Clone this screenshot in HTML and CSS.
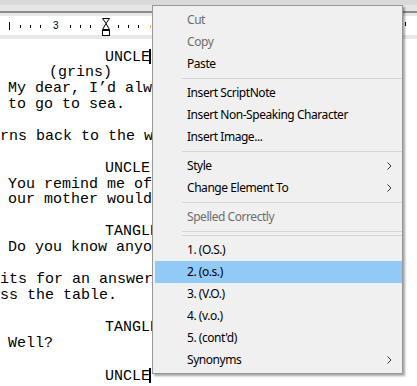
FILE: index.html
```html
<!DOCTYPE html>
<html>
<head>
<meta charset="utf-8">
<link rel="stylesheet" href="styles.css">
</head>
<body>
<div class="app">
  <div class="topband"></div>
  <div class="rulerwrap">
    <div class="ruler">
      <span class="tick tall t1"></span>
      <span class="tick t2"></span>
      <span class="tick t3"></span>
      <span class="tick t4"></span>
      <span class="num">3</span>
      <span class="tick t6"></span>
      <span class="tick t7"></span>
      <span class="tick t8"></span>
      <svg class="marker" width="10" height="20" viewBox="0 0 10 20">
        <path d="M1.5 0.5 H8.5 L5 5.5 Z" fill="#fff" stroke="#000"/>
        <path d="M5 5.5 L1.5 11.5 H8.5 Z" fill="#fff" stroke="#000"/>
        <rect x="1.5" y="12.5" width="7" height="5" fill="#fff" stroke="#000"/>
      </svg>
      <span class="tick t10"></span>
      <span class="tick t11"></span>
      <span class="tick t12"></span>
      <span class="orange"></span>
      <span class="tick far"></span>
    </div>
  </div>
  <div class="doc">
    <div class="line name">UNCLE<span class="caret"></span></div>
    <div class="line paren">(grins)</div>
    <div class="line dlg">My dear, I’d always wanted</div>
    <div class="line dlg">to go to sea.</div>
    <div class="line"></div>
    <div class="line act">rns back to the window.</div>
    <div class="line"></div>
    <div class="line name">UNCLE</div>
    <div class="line dlg">You remind me of</div>
    <div class="line dlg">our mother would</div>
    <div class="line"></div>
    <div class="line name">TANGLE</div>
    <div class="line dlg">Do you know anyone</div>
    <div class="line"></div>
    <div class="line act">its for an answer</div>
    <div class="line act">ss the table.</div>
    <div class="line"></div>
    <div class="line name">TANGLE</div>
    <div class="line dlg">Well?</div>
    <div class="line"></div>
    <div class="line name">UNCLE<span class="caret"></span></div>
  </div>

  <div class="menu">
    <div class="item disabled">Cut</div>
    <div class="item disabled">Copy</div>
    <div class="item">Paste</div>
    <div class="sep"></div>
    <div class="item">Insert ScriptNote</div>
    <div class="item">Insert Non-Speaking Character</div>
    <div class="item">Insert Image...</div>
    <div class="sep"></div>
    <div class="item sub">Style<svg class="chev" width="5" height="8" viewBox="0 0 5 8"><path d="M0.5 0.5 L4 4 L0.5 7.5" fill="none" stroke="#333" stroke-width="1"/></svg></div>
    <div class="item sub">Change Element To<svg class="chev" width="5" height="8" viewBox="0 0 5 8"><path d="M0.5 0.5 L4 4 L0.5 7.5" fill="none" stroke="#333" stroke-width="1"/></svg></div>
    <div class="sep"></div>
    <div class="item disabled">Spelled Correctly</div>
    <div class="sep"></div>
    <div class="sep"></div>
    <div class="item">1. (O.S.)</div>
    <div class="item hover">2. (o.s.)</div>
    <div class="item">3. (V.O.)</div>
    <div class="item">4. (v.o.)</div>
    <div class="item">5. (cont'd)</div>
    <div class="item sub">Synonyms<svg class="chev" width="5" height="8" viewBox="0 0 5 8"><path d="M0.5 0.5 L4 4 L0.5 7.5" fill="none" stroke="#333" stroke-width="1"/></svg></div>
  </div>
</div>
</body>
</html>
```

FILE: styles.css
```css
html, body {
  margin: 0;
  padding: 0;
}
body {
  width: 417px;
  height: 386px;
  overflow: hidden;
  background: #fff;
}
.app {
  position: relative;
  width: 417px;
  height: 386px;
  overflow: hidden;
  background: #fff;
}
.topband {
  height: 11px;
  background: linear-gradient(#d9d9d9 0, #d9d9d9 5px, #e6e6e6 5px);
  border-bottom: 2px solid #8c8c8c;
}
.rulerwrap {
  background: #e8e8e8;
  padding: 3px 0 4px;
}
.ruler {
  position: relative;
  height: 19px;
  background: #fff;
}
.tick {
  position: absolute;
  top: 9px;
  width: 1px;
  height: 3px;
  background: #000;
}
.tick.tall {
  top: 6px;
  height: 8px;
}
.t1 { left: 9px; }
.t2 { left: 20px; }
.t3 { left: 30px; }
.t4 { left: 40px; }
.t6 { left: 70px; }
.t7 { left: 80px; }
.t8 { left: 90px; }
.t10 { left: 118px; }
.t11 { left: 128px; }
.t12 { left: 138px; }
.far { left: 405px; top: 6px; height: 4px; }
.orange {
  position: absolute;
  left: 150px;
  top: 9px;
  width: 1px;
  height: 3px;
  background: #f0b060;
}
.num {
  position: absolute;
  left: 53px;
  top: 3px;
  font: 10px/14px "Liberation Sans", Arial, sans-serif;
  color: #000;
}
.marker {
  position: absolute;
  left: 101px;
  top: 2px;
}
.doc {
  padding-top: 10px;
  font-family: "Liberation Mono", "Courier New", monospace;
  font-size: 15px;
  line-height: 15.95px;
  color: #000;
}
.line {
  height: 15.95px;
  white-space: pre;
}
.name { padding-left: 105px; }
.paren { padding-left: 49px; }
.dlg { padding-left: 8px; }
.act { padding-left: 0; }
.caret {
  display: inline-block;
  width: 2px;
  height: 15px;
  background: #000;
  vertical-align: -3px;
  margin-left: -1px;
}
.menu {
  position: absolute;
  left: 152px;
  top: 5px;
  width: 247px;
  padding: 3px 0 2px 2px;
  background: #f0f0f0;
  border: 1px solid #979797;
  box-shadow: 2px 2px 2px rgba(0,0,0,0.35);
  font-family: "Noto Sans", "Open Sans", sans-serif;
  font-size: 12px;
  letter-spacing: -0.45px;
  color: #000;
}
.item {
  position: relative;
  height: 22px;
  line-height: 22px;
  padding-left: 32px;
  white-space: nowrap;
}
.item.disabled { color: #6d6d6d; }
.item.hover { background: #91c9f7; }
.sep {
  height: 1px;
  margin: 3px 0 3px 27px;
  background: #d7d7d7;
}
.chev {
  position: absolute;
  right: 10px;
  top: 7px;
}
```
